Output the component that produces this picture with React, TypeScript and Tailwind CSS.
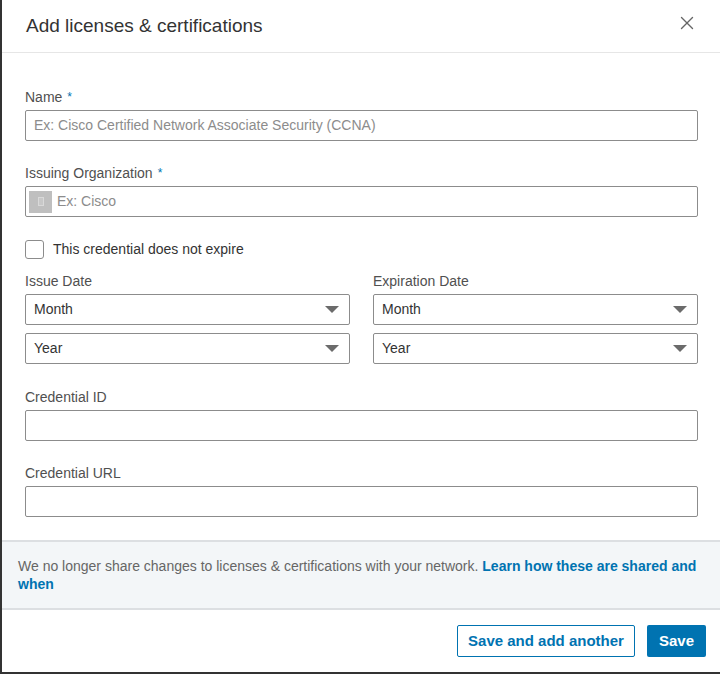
import { X } from 'lucide-react';

const font = { fontFamily: '"Liberation Sans", Arial, sans-serif' };

const Label = ({ text, required }: { text: string; required?: boolean }) => (
  <div className="text-[14px] leading-[18px] text-[#505050] mb-[4px]">
    {text}
    {required && <span className="text-[#0073b1] ml-[5px] text-[12px] align-top">*</span>}
  </div>
);

const Select = ({ value }: { value: string }) => (
  <div className="h-[31px] border border-[#8c8c8c] rounded-[2px] flex items-center justify-between pl-[8px] pr-[10px] text-[14px] text-[#333]">
    <span>{value}</span>
    <svg width="14" height="8" viewBox="0 0 14 8">
      <path d="M0 0h14L7 7z" fill="#6b6b6b" />
    </svg>
  </div>
);

const App = () => {
  return (
    <div className="w-[720px] h-[674px] bg-[#333] pl-[2px] pb-[2px]" style={font}>
      <div className="h-full bg-white flex flex-col">
        {/* Header */}
        <div className="h-[53px] border-b border-[#e6e6e6] flex items-center justify-between pl-[24px] pr-[22px]">
          <h2 className="text-[19px] text-[#333] font-normal pt-[1px]">Add licenses &amp; certifications</h2>
          <X size={22} strokeWidth={1.5} className="text-[#666] -mt-[6px]" />
        </div>

        {/* Form */}
        <div className="flex-1 pl-[23px] pr-[22px] pt-[35px]">
          <Label text="Name" required />
          <div className="h-[31px] border border-[#8c8c8c] rounded-[2px] flex items-center px-[8px] text-[14px] text-[#8c8c8c]">
            Ex: Cisco Certified Network Associate Security (CCNA)
          </div>

          <div className="mt-[23px]">
            <Label text="Issuing Organization" required />
            <div className="h-[31px] border border-[#8c8c8c] rounded-[2px] flex items-center pl-[3px] gap-[5px] text-[14px] text-[#8c8c8c]">
              <div className="w-[23px] h-[22px] bg-[#bfbfbf] flex items-center justify-center">
                <div className="w-[6px] h-[9px] border border-[#d9d9d9] bg-[#c8c8c8]" />
              </div>
              Ex: Cisco
            </div>
          </div>

          <label className="mt-[22px] flex items-center gap-[9px] text-[14px] text-[#333]">
            <span className="w-[19px] h-[19px] border border-[#8c8c8c] rounded-[3px] bg-white" />
            This credential does not expire
          </label>

          <div className="mt-[12px] grid grid-cols-2 gap-x-[23px]">
            <div>
              <Label text="Issue Date" />
              <div className="flex flex-col gap-[8px]">
                <Select value="Month" />
                <Select value="Year" />
              </div>
            </div>
            <div>
              <Label text="Expiration Date" />
              <div className="flex flex-col gap-[8px]">
                <Select value="Month" />
                <Select value="Year" />
              </div>
            </div>
          </div>

          <div className="mt-[24px]">
            <Label text="Credential ID" />
            <div className="h-[31px] border border-[#8c8c8c] rounded-[2px]" />
          </div>

          <div className="mt-[23px]">
            <Label text="Credential URL" />
            <div className="h-[31px] border border-[#8c8c8c] rounded-[2px]" />
          </div>
        </div>

        {/* Notice */}
        <div className="bg-[#f3f6f8] border-y-2 border-[#dcdfe2] px-[16px] pt-[15px] pb-[15px] text-[14px] leading-[18px] text-[#666]">
          We no longer share changes to licenses &amp; certifications with your network.{' '}
          <a className="text-[#0073b1] font-bold">Learn how these are shared and when</a>
        </div>

        {/* Footer */}
        <div className="h-[62px] flex items-center justify-end gap-[12px] pr-[14px]">
          <button className="h-[32px] px-[10px] border border-[#0073b1] rounded-[2px] text-[#0073b1] text-[15px] font-bold">
            Save and add another
          </button>
          <button className="h-[32px] px-[12px] bg-[#0073b1] rounded-[2px] text-white text-[15px] font-bold">
            Save
          </button>
        </div>
      </div>
    </div>
  );
};

export default App;
